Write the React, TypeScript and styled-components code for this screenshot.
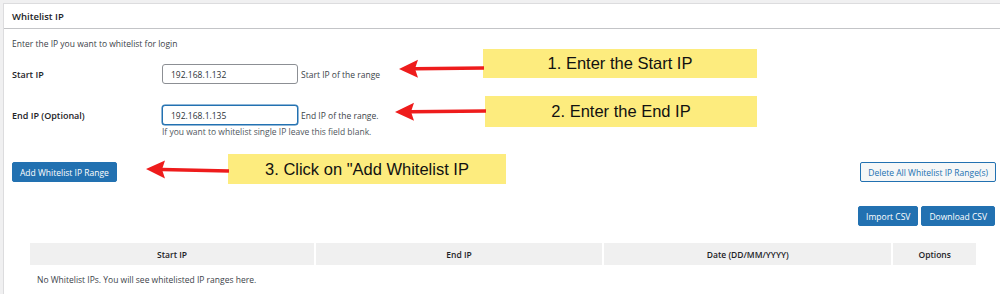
import React from 'react';
import styled, { createGlobalStyle } from 'styled-components';

const GlobalStyle = createGlobalStyle`
  html, body {
    margin: 0;
    padding: 0;
    background: #f0f0f1;
    overflow: hidden;
  }
  body {
    font-family: "Open Sans", "Noto Sans", sans-serif;
    color: #1d2327;
  }
`;

const Page = styled.div`
  position: relative;
  width: 1000px;
  height: 294px;
  padding: 3px 0 0 3px;
  box-sizing: border-box;
`;

const Panel = styled.div`
  width: 1010px;
  height: 300px;
  background: #fff;
  border: 1px solid #dcdcde;
  border-right: none;
  box-sizing: border-box;
`;

const PanelHeader = styled.div`
  height: 24px;
  display: flex;
  align-items: center;
  padding-left: 8px;
  border-bottom: 1px solid #c3c4c7;
  font-size: 9.5px;
  font-weight: 600;
`;

const PanelBody = styled.div`
  padding: 0 0 0 8px;
  font-size: 8.5px;
`;

const Intro = styled.p`
  margin: 0;
  height: 30px;
  line-height: 30px;
  color: #3c434a;
`;

const FormGrid = styled.div`
  display: grid;
  grid-template-columns: 150px 1fr;
  row-gap: 21px;
  margin-top: 5px;
`;

const Label = styled.label`
  height: 20px;
  display: flex;
  align-items: center;
  font-weight: 600;
  font-size: 9px;
`;

const Field = styled.div`
  display: flex;
  flex-direction: column;
`;

const FieldLine = styled.div`
  display: flex;
  align-items: center;
  gap: 3px;
  color: #3c434a;
`;

const Input = styled.input<{ $focused?: boolean }>`
  width: 136px;
  height: 20px;
  box-sizing: border-box;
  padding: 0 8px;
  font-family: inherit;
  font-size: 8.5px;
  color: #2c3338;
  border: 1px solid ${p => (p.$focused ? '#2271b1' : '#8c8f94')};
  border-radius: 3px;
  box-shadow: ${p => (p.$focused ? '0 0 0 0.5px #2271b1' : 'none')};
  outline: none;
`;

const Help = styled.span`
  color: #50575e;
  margin-top: 1px;
`;

const ActionRow = styled.div`
  display: flex;
  justify-content: space-between;
  align-items: center;
  margin-top: 25px;
  width: 984px;
`;

const Button = styled.button<{ $outline?: boolean }>`
  height: 20px;
  padding: 0 7px;
  font-family: inherit;
  font-size: 8.5px;
  border-radius: 2px;
  border: 1px solid #2271b1;
  background: ${p => (p.$outline ? '#f6f7f7' : '#2271b1')};
  color: ${p => (p.$outline ? '#2271b1' : '#fff')};
  cursor: pointer;
  white-space: nowrap;
`;

const CsvRow = styled.div`
  display: flex;
  justify-content: flex-end;
  gap: 3px;
  margin-top: 24px;
  width: 983px;
`;

const Table = styled.table`
  margin: 17px 0 0 26px;
  width: 946px;
  border-collapse: separate;
  border-spacing: 0;
  font-size: 8.5px;
`;

const Th = styled.th<{ $w: number }>`
  width: ${p => p.$w}px;
  height: 22px;
  padding: 0;
  background: #f0f0f0;
  font-weight: 600;
  border-left: 2px solid #fff;
  &:first-child {
    border-left: none;
  }
`;

const Td = styled.td`
  height: 28px;
  padding: 0 0 0 7px;
  color: #3c434a;
`;

const Note = styled.div<{ $x: number; $y: number; $w: number; $h: number }>`
  position: absolute;
  left: ${p => p.$x}px;
  top: ${p => p.$y}px;
  width: ${p => p.$w}px;
  height: ${p => p.$h}px;
  background: #fdec7e;
  display: flex;
  align-items: center;
  justify-content: center;
  font-family: "Liberation Sans", Arial, sans-serif;
  font-size: 16.5px;
  color: #111;
`;

const ArrowSvg = styled.svg`
  position: absolute;
  left: 0;
  top: 0;
  pointer-events: none;
`;

const arrows = [
  { tip: [399, 69], end: [484, 68] },
  { tip: [395, 112], end: [486, 111] },
  { tip: [146, 169], end: [229, 171] },
];

const Arrow: React.FC<{ tip: number[]; end: number[] }> = ({ tip, end }) => {
  const [tx, ty] = tip;
  const [ex, ey] = end;
  const headLen = 19;
  const baseX = tx + headLen;
  const slope = (ey - ty) / (ex - tx);
  const by = ty + slope * headLen;
  return (
    <g>
      <line x1={baseX - 3} y1={by} x2={ex} y2={ey} stroke="#ee1c1c" strokeWidth={3.5} />
      <polygon points={`${tx},${ty} ${baseX},${by - 9} ${baseX - 3},${by} ${baseX},${by + 9}`} fill="#ee1c1c" />
    </g>
  );
};

export default function App() {
  return (
    <>
      <GlobalStyle />
      <Page>
        <Panel>
          <PanelHeader>Whitelist IP</PanelHeader>
          <PanelBody>
            <Intro>Enter the IP you want to whitelist for login</Intro>
            <FormGrid>
              <Label>Start IP</Label>
              <Field>
                <FieldLine>
                  <Input defaultValue="192.168.1.132" readOnly />
                  <span>Start IP of the range</span>
                </FieldLine>
              </Field>
              <Label>End IP (Optional)</Label>
              <Field>
                <FieldLine>
                  <Input $focused defaultValue="192.168.1.135" readOnly />
                  <span>End IP of the range.</span>
                </FieldLine>
                <Help>If you want to whitelist single IP leave this field blank.</Help>
              </Field>
            </FormGrid>
            <ActionRow>
              <Button>Add Whitelist IP Range</Button>
              <Button $outline>Delete All Whitelist IP Range(s)</Button>
            </ActionRow>
            <CsvRow>
              <Button>Import CSV</Button>
              <Button>Download CSV</Button>
            </CsvRow>
          </PanelBody>
          <Table>
            <thead>
              <tr>
                <Th $w={286}>Start IP</Th>
                <Th $w={288}>End IP</Th>
                <Th $w={289}>Date (DD/MM/YYYY)</Th>
                <Th $w={83}>Options</Th>
              </tr>
            </thead>
            <tbody>
              <tr>
                <Td colSpan={4}>No Whitelist IPs. You will see whitelisted IP ranges here.</Td>
              </tr>
            </tbody>
          </Table>
        </Panel>
        <Note $x={483} $y={49} $w={274} $h={29}>1. Enter the Start IP</Note>
        <Note $x={485} $y={96} $w={272} $h={31}>2. Enter the End IP</Note>
        <Note $x={228} $y={154} $w={278} $h={30}>3. Click on "Add Whitelist IP</Note>
        <ArrowSvg width={1000} height={294}>
          {arrows.map((a, i) => (
            <Arrow key={i} tip={a.tip} end={a.end} />
          ))}
        </ArrowSvg>
      </Page>
    </>
  );
}
